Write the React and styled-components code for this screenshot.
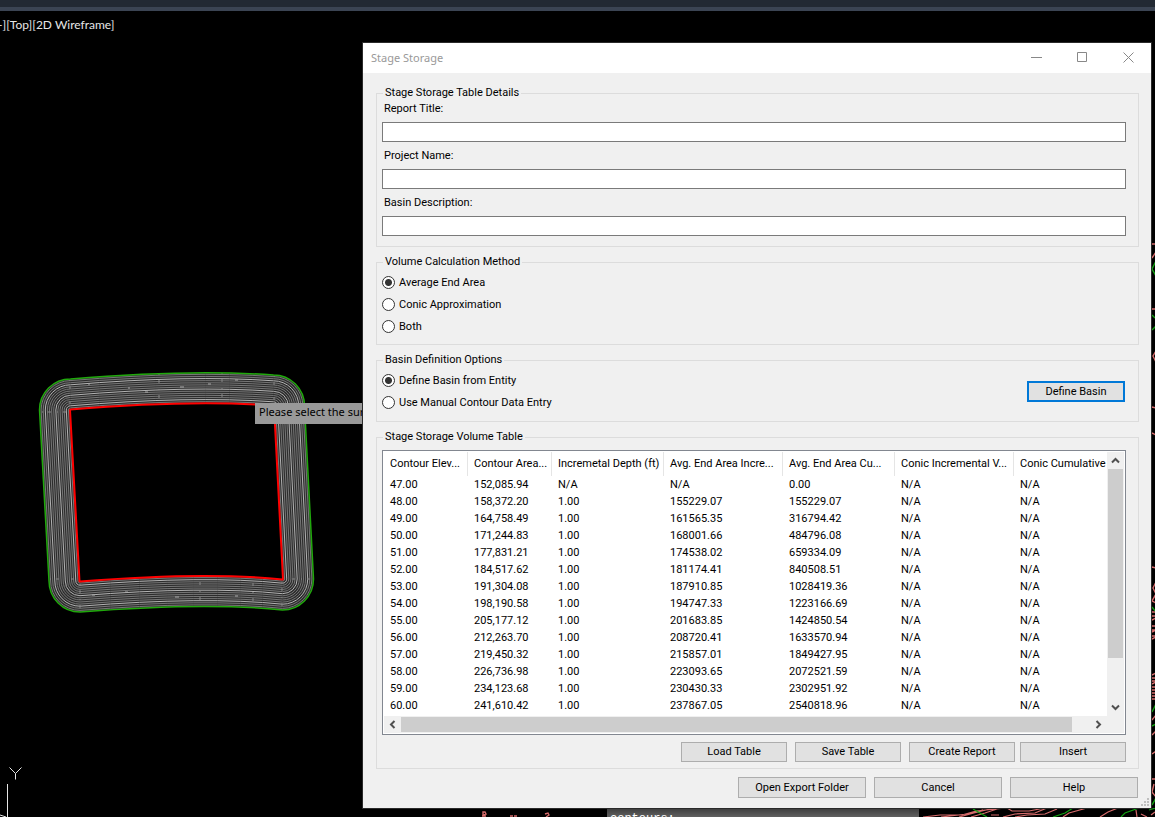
import React, { useState } from 'react';
import styled, { createGlobalStyle } from 'styled-components';

const GlobalStyle = createGlobalStyle`
  * {
    box-sizing: border-box;
  }

  body {
    margin: 0;
    background: #000;
    font-family: Roboto, 'Liberation Sans', sans-serif;
    font-size: 11px;
    line-height: 14px;
    color: #000;
  }

  button, input {
    font: inherit;
    color: inherit;
  }
`;

const Screen = styled.div`
  display: flex;
  flex-direction: column;
  height: 100vh;
  overflow: hidden;
`;

const Ribbon = styled.header`
  flex: none;
  height: 11px;
  background: #222933;
  border-bottom: 4px solid #3b4453;
`;

const Viewport = styled.main`
  position: relative;
  flex: 1;
  overflow: hidden;
`;

const ViewLabel = styled.div`
  position: absolute;
  top: 6px;
  left: -2px;
  color: #e6e6e6;
  font-family: Lato, sans-serif;
  font-size: 12px;
  line-height: 16px;
  white-space: nowrap;
`;

const Drawing = styled.svg`
  position: absolute;
  top: ${(props) => props.$top || 'auto'};
  bottom: ${(props) => props.$bottom || 'auto'};
  left: ${(props) => props.$left || 'auto'};
  right: ${(props) => props.$right || 'auto'};
  fill: none;
`;

const Prompt = styled.div`
  position: absolute;
  top: 392px;
  left: 255px;
  width: 180px;
  padding: 1px 4px 4px;
  background: #999;
  font-family: 'Noto Sans', sans-serif;
  font-size: 11px;
  line-height: 16px;
  white-space: nowrap;
`;

const CommandLine = styled.div`
  position: absolute;
  bottom: 0;
  left: 607px;
  right: 236px;
  height: 9px;
  padding: 3px 3px 0;
  overflow: hidden;
  background: linear-gradient(#3c3c3c, #606060);
  color: #fff;
  font-family: 'Liberation Mono', monospace;
  font-size: 12px;
  line-height: 16px;
`;

const Dialog = styled.section`
  position: absolute;
  top: 32px;
  left: 363px;
  right: 4px;
  background: #f0f0f0;
  box-shadow: 0 0 0 1px #2a2a2a;
`;

const TitleBar = styled.div`
  display: flex;
  height: 30px;
  background: #fff;
`;

const Title = styled.h1`
  flex: 1;
  margin: 0;
  padding-left: 8px;
  color: #999;
  font-family: 'Noto Sans', sans-serif;
  font-size: 11px;
  font-weight: 400;
  line-height: 30px;
`;

const WindowButton = styled.button`
  display: flex;
  justify-content: center;
  width: 46px;
  padding: 9px 0 0;
  border: 0;
  background: none;
  color: #888;

  svg {
    fill: none;
    stroke: currentColor;
  }
`;

const Body = styled.form`
  display: flex;
  flex-direction: column;
  gap: 8px;
  padding: 13px 12px 10px 13px;
`;

const Group = styled.fieldset`
  min-width: 0;
  margin: 0;
  padding: ${(props) => props.$padding};
  border: 1px solid #dcdcdc;
`;

const Legend = styled.legend`
  margin-left: 1px;
  padding: 0 2px;
`;

const Field = styled.label`
  display: flex;
  flex-direction: column;
  gap: 6px;

  & + & {
    margin-top: 7px;
  }

  span {
    padding-left: 2px;
  }
`;

const TextBox = styled.input`
  width: 100%;
  height: 20px;
  padding: 0 3px;
  border: 1px solid #7a7a7a;
  background: #fff;
  outline: none;
`;

const RadioLabel = styled.label`
  display: flex;
  gap: 4px;
  height: 22px;
  padding-top: 4px;
`;

const Radio = styled.input`
  appearance: none;
  width: 13px;
  height: 13px;
  margin: 0;
  border: 1px solid #333;
  border-radius: 50%;
  background: #fff;

  &:checked {
    background: radial-gradient(circle, #333 3px, #fff 4px);
  }
`;

const Split = styled.div`
  display: flex;
  justify-content: space-between;
  align-items: flex-start;

  > button {
    margin-top: 11px;
  }
`;

const Button = styled.button`
  width: ${(props) => props.$width};
  height: ${(props) => props.$height || '21px'};
  padding: 0;
  border: ${(props) => (props.$active ? '2px solid #0078d7' : '1px solid #adadad')};
  background: #e1e1e1;
`;

const ButtonRow = styled.div`
  display: flex;
  justify-content: flex-end;
  gap: ${(props) => props.$gap || '8px'};
  padding: ${(props) => props.$padding || '0'};
`;

const ListView = styled.div`
  display: grid;
  grid-template-columns: 1fr 17px;
  grid-template-rows: 264px 17px;
  padding: 1px;
  border: 1px solid #828790;
  background: #fff;
`;

const ListBody = styled.div`
  overflow: hidden;
`;

const Table = styled.table`
  width: 749px;
  table-layout: fixed;
  border-collapse: separate;
  border-spacing: 0;
`;

const cell = `
  padding: 0 0 0 6px;
  overflow: hidden;
  font-weight: 400;
  text-align: left;
  white-space: nowrap;
`;

const HeadCell = styled.th`
  ${cell}
  width: ${(props) => props.$width}px;
  height: 24px;
  border-right: 1px solid #e5e5e5;
`;

const Cell = styled.td`
  ${cell}
  height: 17px;
`;

const ScrollBar = styled.div`
  display: flex;
  flex-direction: ${(props) => (props.$vertical ? 'column' : 'row')};
  background: #f0f0f0;
`;

const ScrollTrack = styled.div`
  flex: 1;
`;

const ScrollThumb = styled.div`
  width: ${(props) => (props.$vertical ? '15px' : props.$size)};
  height: ${(props) => (props.$vertical ? props.$size : '15px')};
  margin: ${(props) => (props.$vertical ? '0 1px' : '1px 0')};
  background: #cdcdcd;
`;

const ScrollButton = styled.button`
  display: flex;
  align-items: center;
  justify-content: center;
  width: 17px;
  height: 17px;
  padding: 0;
  border: 0;
  background: none;

  svg {
    fill: none;
    stroke: #505050;
    stroke-width: 2;
  }
`;

const Corner = styled.div`
  background: #f0f0f0;
`;

const Grip = styled.svg`
  position: absolute;
  right: 2px;
  bottom: 2px;
  fill: #bfbfbf;
`;

const columns = [
  { title: 'Contour Elev...', width: 84 },
  { title: 'Contour Area...', width: 84 },
  { title: 'Incremetal Depth (ft)', width: 112 },
  { title: 'Avg. End Area Incre...', width: 119 },
  { title: 'Avg. End Area Cu...', width: 112 },
  { title: 'Conic Incremental V...', width: 119 },
  { title: 'Conic Cumulative ...', width: 119 },
];

const rows = [
  ['47.00', '152,085.94', 'N/A', 'N/A', '0.00'],
  ['48.00', '158,372.20', '1.00', '155229.07', '155229.07'],
  ['49.00', '164,758.49', '1.00', '161565.35', '316794.42'],
  ['50.00', '171,244.83', '1.00', '168001.66', '484796.08'],
  ['51.00', '177,831.21', '1.00', '174538.02', '659334.09'],
  ['52.00', '184,517.62', '1.00', '181174.41', '840508.51'],
  ['53.00', '191,304.08', '1.00', '187910.85', '1028419.36'],
  ['54.00', '198,190.58', '1.00', '194747.33', '1223166.69'],
  ['55.00', '205,177.12', '1.00', '201683.85', '1424850.54'],
  ['56.00', '212,263.70', '1.00', '208720.41', '1633570.94'],
  ['57.00', '219,450.32', '1.00', '215857.01', '1849427.95'],
  ['58.00', '226,736.98', '1.00', '223093.65', '2072521.59'],
  ['59.00', '234,123.68', '1.00', '230430.33', '2302951.92'],
  ['60.00', '241,610.42', '1.00', '237867.05', '2540818.96'],
];

// Basin contour at a distance d outside the basin floor
const contour = (d) => `
  M${40.5 - d} 50 A${d} ${d} 0 0 1 40.5 ${50 - d}
  Q160 ${40 - d} 243.5 ${46 - d} A${d} ${d} 0 0 1 ${243.5 + d} 46
  L${252.5 + d} 219 A${d} ${d} 0 0 1 252.5 ${219 + d}
  Q175 ${211 + d} 50 ${221 + d} A${d} ${d} 0 0 1 ${50 - d} 221 Z`;

const steps = Array.from({ length: 14 }, (_, i) => i + 1);

const Basin = () => (
  <Drawing $top="349px" $left="30px" width="300" height="260">
    <path d={contour(16)} stroke="#2c2c2c" strokeWidth="30" />
    {steps.map((i) => (
      <path key={i} d={contour(i * 2.1)} stroke={i % 5 === 2 ? '#b4b4b4' : '#777'} />
    ))}
    <path
      d="M129 14v30M192 13v30M170 216v29M223 217v28M40 20v28M244 16v28M12 52h26M20 219h28M256 219h25M50 224v27M252 222v27"
      stroke="#888"
      strokeDasharray="1 5 3 6"
    />
    <path d="M58 24h2M98 28h2M115 32h3M150 27h4M178 24h3M205 20h3M62 235h3M95 232h3M145 237h4M205 236h3" stroke="#aaa" />
    <path d={contour(31)} stroke="#20a80c" strokeWidth="1.5" />
    <path d={contour(0.5)} stroke="#f00" strokeWidth="2" />
  </Drawing>
);

const Axis = () => (
  <Drawing $bottom="0" $left="0" width="30" height="55" stroke="#e6e6e6">
    <path d="M9.5 5.5l6 6l6-6M15.5 11.5v6M7.5 22v33M0 53l6 2" />
  </Drawing>
);

const SideContours = () => (
  <Drawing $top="219px" $right="0" width="4" height="587" stroke="#d46a6a" strokeWidth="1.4">
    <path d="M1 14h3M5 22l-4 6M1 79h4M5 121l-3 5 3 6M1 177l4 1M1 203l4 2M1 337l4 1M5 352l-3 6 3 6-4 7 4 2M1 382h4M1 386h4M1 390l4-2M1 396h4M1 400h4M1 402l4-2M1 406h4M1 409l4-2M1 445l4-2M1 448h4M1 451h4M1 454l4-2M1 457h4M1 460h4M1 463h4M1 466h4M1 469h4M1 490l4-5M1 505l4-4M1 524l4-3M1 549h4M3 554l-2 8 4 5" />
    <path d="M5 31l-4 8 4 7M1 85l3 3M1 100l4-4M1 377l4 5M1 482l4-8M1 496l4-2M1 575l4-7" stroke="#12a012" />
  </Drawing>
);

const BottomContours = () => (
  <>
    <Drawing $bottom="0" $left="480px" width="100" height="9" stroke="#d46a6a" strokeWidth="1.4">
      <path d="M3 4h2l1 2-3 1zM8 0h2M2 8h4M30 8h3M34 8h3M65 6l3-1 1 2-3 2" />
    </Drawing>
    <Drawing $bottom="0" $right="0" width="236" height="9" stroke="#d46a6a" strokeWidth="1.2">
      <path d="M4 9l17-2 22 0 14-4 30-3M22 9l26-3 16-4M40 9l15-4 20-5M52 9l14-4 12-4M72 7h8M88 0l5 3h17l16-3M84 9l12-3 20-1 12-5M96 9l12-2 18-1 12-5M144 9l6-4 18-5M181 9l8-5 10-4M218 9l-1-7M222 6l6 3M232 7l4-3" />
      <path d="M54 1l14 8M134 9l12-4 8-5M202 9l4-4 14-5M230 2l6-2" stroke="#12a012" />
    </Drawing>
  </>
);

const RadioOption = ({ name, label, value, onChange }) => (
  <RadioLabel>
    <Radio type="radio" name={name} checked={value === label} onChange={() => onChange(label)} />
    {label}
  </RadioLabel>
);

const Arrow = ({ d, label }) => (
  <ScrollButton type="button" aria-label={label}>
    <svg width="9" height="9">
      <path d={d} />
    </svg>
  </ScrollButton>
);

const VolumeTable = () => (
  <ListView>
    <ListBody>
      <Table>
        <thead>
          <tr>
            {columns.map((column) => (
              <HeadCell key={column.title} $width={column.width}>
                {column.title}
              </HeadCell>
            ))}
          </tr>
        </thead>
        <tbody>
          {rows.map((row) => (
            <tr key={row[0]}>
              {[...row, 'N/A', 'N/A'].map((value, i) => (
                <Cell key={columns[i].title}>{value}</Cell>
              ))}
            </tr>
          ))}
        </tbody>
      </Table>
    </ListBody>
    <ScrollBar $vertical>
      <Arrow label="Scroll up" d="M1 6.5l3.5-3.5l3.5 3.5" />
      <ScrollTrack>
        <ScrollThumb $vertical $size="82%" />
      </ScrollTrack>
      <Arrow label="Scroll down" d="M1 2.5l3.5 3.5l3.5-3.5" />
    </ScrollBar>
    <ScrollBar>
      <Arrow label="Scroll left" d="M6.5 1l-3.5 3.5l3.5 3.5" />
      <ScrollTrack>
        <ScrollThumb $size="calc(100% - 18px)" />
      </ScrollTrack>
      <Arrow label="Scroll right" d="M2.5 1l3.5 3.5l-3.5 3.5" />
    </ScrollBar>
    <Corner />
  </ListView>
);

const StageStorageDialog = () => {
  const [method, setMethod] = useState('Average End Area');
  const [source, setSource] = useState('Define Basin from Entity');

  return (
    <Dialog role="dialog" aria-labelledby="dialog-title">
      <TitleBar>
        <Title id="dialog-title">Stage Storage</Title>
        <WindowButton type="button" aria-label="Minimize">
          <svg width="11" height="11"><path d="M0 5.5h11" /></svg>
        </WindowButton>
        <WindowButton type="button" aria-label="Maximize">
          <svg width="11" height="11"><path d="M.5.5h9v9h-9z" /></svg>
        </WindowButton>
        <WindowButton type="button" aria-label="Close">
          <svg width="11" height="11"><path d="M.5.5l10 10M10.5.5l-10 10" /></svg>
        </WindowButton>
      </TitleBar>
      <Body onSubmit={(e) => e.preventDefault()}>
        <Group $padding="2px 12px 10px 5px">
          <Legend>Stage Storage Table Details</Legend>
          {['Report Title:', 'Project Name:', 'Basin Description:'].map((label) => (
            <Field key={label}>
              <span>{label}</span>
              <TextBox type="text" />
            </Field>
          ))}
        </Group>
        <Group $padding="3px 12px 6px 5px">
          <Legend>Volume Calculation Method</Legend>
          {['Average End Area', 'Conic Approximation', 'Both'].map((label) => (
            <RadioOption key={label} name="method" label={label} value={method} onChange={setMethod} />
          ))}
        </Group>
        <Group $padding="3px 13px 7px 5px">
          <Legend>Basin Definition Options</Legend>
          <Split>
            <div>
              {['Define Basin from Entity', 'Use Manual Contour Data Entry'].map((label) => (
                <RadioOption key={label} name="source" label={label} value={source} onChange={setSource} />
              ))}
            </div>
            <Button type="button" $width="98px" $active>Define Basin</Button>
          </Split>
        </Group>
        <Group $padding="6px 12px 6px 5px">
          <Legend>Stage Storage Volume Table</Legend>
          <VolumeTable />
          <ButtonRow $gap="5px" $padding="7px 0 0">
            <ButtonRow>
              {['Load Table', 'Save Table', 'Create Report'].map((label) => (
                <Button key={label} type="button" $width="106px" $height="20px">{label}</Button>
              ))}
            </ButtonRow>
            <Button type="button" $width="106px" $height="20px">Insert</Button>
          </ButtonRow>
        </Group>
        <ButtonRow $padding="0 1px 0 0">
          {['Open Export Folder', 'Cancel', 'Help'].map((label) => (
            <Button key={label} type="button" $width="128px">{label}</Button>
          ))}
        </ButtonRow>
      </Body>
      <Grip width="8" height="8">
        <path d="M6 0h2v2h-2zM3 3h2v2h-2zM6 3h2v2h-2zM0 6h2v2h-2zM3 6h2v2h-2zM6 6h2v2h-2z" />
      </Grip>
    </Dialog>
  );
};

const App = () => (
  <>
    <GlobalStyle />
    <Screen>
      <Ribbon />
      <Viewport>
        <ViewLabel>-][Top][2D Wireframe]</ViewLabel>
        <Basin />
        <Axis />
        <SideContours />
        <BottomContours />
        <Prompt>Please select the sur</Prompt>
        <CommandLine>contours:</CommandLine>
        <StageStorageDialog />
      </Viewport>
    </Screen>
  </>
);

export default App;
